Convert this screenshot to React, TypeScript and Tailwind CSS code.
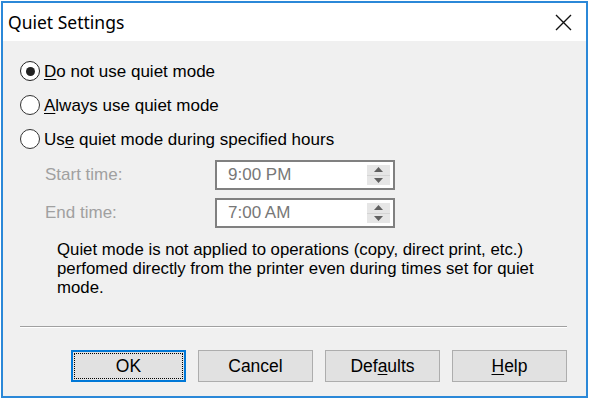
import React from "react";

const body = "font-['Liberation_Sans',Arial,sans-serif]";

function Radio({ checked, children }: { checked?: boolean; children: React.ReactNode }) {
  return (
    <div className="flex items-center h-[34px]">
      <div
        className={`w-[20px] h-[20px] rounded-full bg-white flex items-center justify-center ${
          checked ? "border-[1.5px] border-[#222]" : "border border-[#333]"
        }`}
      >
        {checked && <div className="w-[9px] h-[9px] rounded-full bg-[#222]" />}
      </div>
      <span className="ml-[4px] text-[17px] text-black leading-none">{children}</span>
    </div>
  );
}

function Spin({ value }: { value: string }) {
  return (
    <div className="w-[180px] h-[30px] border-2 border-[#808080] bg-white flex items-center pl-[11px] pr-[3px]">
      <span className="flex-1 text-[17px] text-[#777]">{value}</span>
      <div className="w-[23px] h-[20px] bg-[#e6e6e6] flex flex-col">
        <div className="flex-1 flex items-center justify-center border-b border-[#d4d4d4]">
          <svg width="9" height="5" viewBox="0 0 9 5">
            <path d="M0 5 L4.5 0 L9 5 Z" fill="#606060" />
          </svg>
        </div>
        <div className="flex-1 flex items-center justify-center">
          <svg width="9" height="5" viewBox="0 0 9 5">
            <path d="M0 0 L4.5 5 L9 0 Z" fill="#606060" />
          </svg>
        </div>
      </div>
    </div>
  );
}

function Btn({ children, focus }: { children: React.ReactNode; focus?: boolean }) {
  return (
    <div
      className={`w-[115px] h-[32px] flex bg-[#e1e1e1] ${
        focus ? "border-2 border-[#0078d7]" : "border border-[#adadad]"
      }`}
    >
      <div
        className={`flex-1 flex items-center justify-center text-[17.5px] text-black ${
          focus ? "m-[1px] border border-dotted border-black" : ""
        }`}
      >
        {children}
      </div>
    </div>
  );
}

export default function App() {
  return (
    <div className={`w-[590px] h-[400px] bg-white pt-[1px] pl-[1px] ${body}`}>
      <div className="w-[587px] h-[397px] border-2 border-[#2b88d8] bg-[#f0f0f0] flex flex-col">
        {/* Title bar */}
        <div className="h-[38px] bg-white flex items-center justify-between pl-[5px] pr-[14px]">
          <span className="font-['Noto_Sans',sans-serif] text-[17.5px] text-black">Quiet Settings</span>
          <svg width="17" height="17" viewBox="0 0 17 17">
            <path d="M1 1 L16 16 M16 1 L1 16" stroke="#111" strokeWidth="1.4" />
          </svg>
        </div>

        {/* Content */}
        <div className="flex flex-col pt-[13px] pl-[17px]">
          <Radio checked>
            <span className="underline underline-offset-2">D</span>o not use quiet mode
          </Radio>
          <Radio>
            <span className="underline underline-offset-2">A</span>lways use quiet mode
          </Radio>
          <Radio>
            Us<span className="underline underline-offset-2">e</span> quiet mode during specified hours
          </Radio>

          <div className="flex flex-col gap-[8px] mt-[4px] ml-[25px]">
            <div className="flex items-center">
              <span className="w-[170px] text-[17px] text-[#a0a0a0]">Start time:</span>
              <Spin value="9:00 PM" />
            </div>
            <div className="flex items-center">
              <span className="w-[170px] text-[17px] text-[#a0a0a0]">End time:</span>
              <Spin value="7:00 AM" />
            </div>
          </div>

          <p className="mt-[12px] ml-[37px] text-[16.8px] leading-[19px] text-black">
            Quiet mode is not applied to operations (copy, direct print, etc.)
            <br />
            perfomed directly from the printer even during times set for quiet
            <br />
            mode.
          </p>
        </div>

        <div className="mt-[29px] ml-[17px] mr-[19px] border-t border-[#a0a0a0] border-b border-b-white" />

        <div className="flex justify-end gap-[12px] mt-[22px] mr-[19px]">
          <Btn focus>OK</Btn>
          <Btn>Cancel</Btn>
          <Btn>
            Def<span className="underline underline-offset-2">a</span>ults
          </Btn>
          <Btn>
            <span className="underline underline-offset-2">H</span>elp
          </Btn>
        </div>
      </div>
    </div>
  );
}
